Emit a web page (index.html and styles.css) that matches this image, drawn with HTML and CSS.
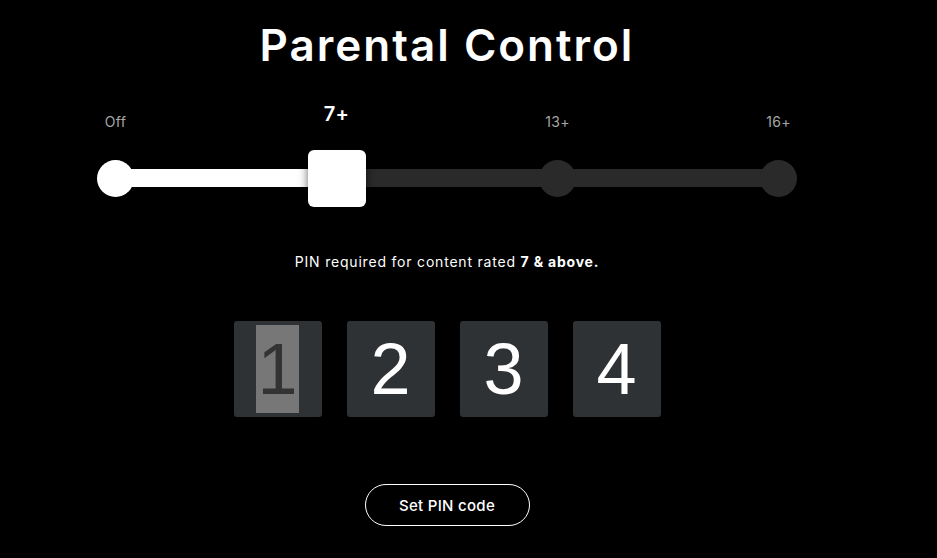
FILE: index.html
```html
<!DOCTYPE html>
<html lang="en">
<head>
<meta charset="utf-8">
<title>Parental Control</title>
<link rel="stylesheet" href="styles.css">
</head>
<body>
<main class="page">
  <h1 class="title">Parental Control</h1>

  <div class="levels">
    <div class="labels">
      <span class="label">Off</span>
      <span class="label label-active">7+</span>
      <span class="label">13+</span>
      <span class="label">16+</span>
    </div>
    <div class="slider">
      <div class="track"></div>
      <span class="stop"><span class="dot dot-on"></span></span>
      <span class="stop"><span class="handle"></span></span>
      <span class="stop"><span class="dot"></span></span>
      <span class="stop"><span class="dot"></span></span>
    </div>
  </div>

  <p class="note">PIN required for content rated <strong>7 &amp; above.</strong></p>

  <div class="pin">
    <div class="digit"><span class="selected">1</span></div>
    <div class="digit">2</div>
    <div class="digit">3</div>
    <div class="digit">4</div>
  </div>

  <button class="btn" type="button">Set PIN code</button>
</main>
</body>
</html>
```

FILE: styles.css
```css
html, body {
  margin: 0;
  padding: 0;
  background: #000;
}

body {
  font-family: "Inter", "Open Sans", sans-serif;
  color: #fff;
}

.page {
  width: 894px;
  height: 558px;
  display: flex;
  flex-direction: column;
  align-items: center;
  box-sizing: border-box;
  padding-top: 19px;
}

.title {
  margin: 0;
  font-size: 44px;
  line-height: 52px;
  font-weight: 600;
  letter-spacing: 2px;
}

.levels {
  width: 700px;
  margin-top: 30px;
}

.labels {
  display: flex;
  justify-content: space-between;
  align-items: flex-end;
  height: 29px;
}

.label {
  width: 37px;
  display: flex;
  justify-content: center;
  white-space: nowrap;
  font-size: 14px;
  line-height: 17px;
  color: #a6a6a6;
  letter-spacing: 0.3px;
}

.label-active {
  font-size: 20px;
  line-height: 24px;
  font-weight: 600;
  color: #fff;
  margin-bottom: 4px;
}

.slider {
  position: relative;
  height: 58px;
  margin-top: 19px;
  display: flex;
  justify-content: space-between;
  align-items: center;
}

.track {
  position: absolute;
  left: 18px;
  right: 19px;
  top: 20px;
  height: 18px;
  background: linear-gradient(to right, #fff 222px, #2a2a2a 222px);
}

.stop {
  position: relative;
  width: 37px;
  display: flex;
  justify-content: center;
  align-items: center;
}

.dot {
  width: 37px;
  height: 37px;
  border-radius: 50%;
  background: #2a2a2a;
}

.dot-on {
  background: #fff;
}

.handle {
  flex: none;
  width: 58px;
  height: 57px;
  border-radius: 6px;
  background: #fff;
  box-shadow: 0 0 10px rgba(0, 0, 0, 0.6);
}

.note {
  margin: 46px 0 0;
  font-size: 14px;
  line-height: 18px;
  letter-spacing: 0.8px;
}

.note strong {
  font-weight: 700;
}

.pin {
  display: flex;
  gap: 25px;
  margin-top: 50px;
}

.digit {
  width: 88px;
  height: 96px;
  border-radius: 3px;
  background: #2f3235;
  display: flex;
  justify-content: center;
  align-items: center;
  font-family: "Liberation Sans", Arial, sans-serif;
  font-size: 72px;
  line-height: 88px;
}

.selected {
  background: #777;
  color: #333;
  padding: 0 1.5px;
}

.btn {
  margin-top: 67px;
  width: 165px;
  height: 42px;
  border: 1px solid #fff;
  border-radius: 21px;
  background: transparent;
  color: #fff;
  font-family: inherit;
  font-size: 15px;
  font-weight: 500;
  letter-spacing: 0.3px;
  cursor: pointer;
}
```
